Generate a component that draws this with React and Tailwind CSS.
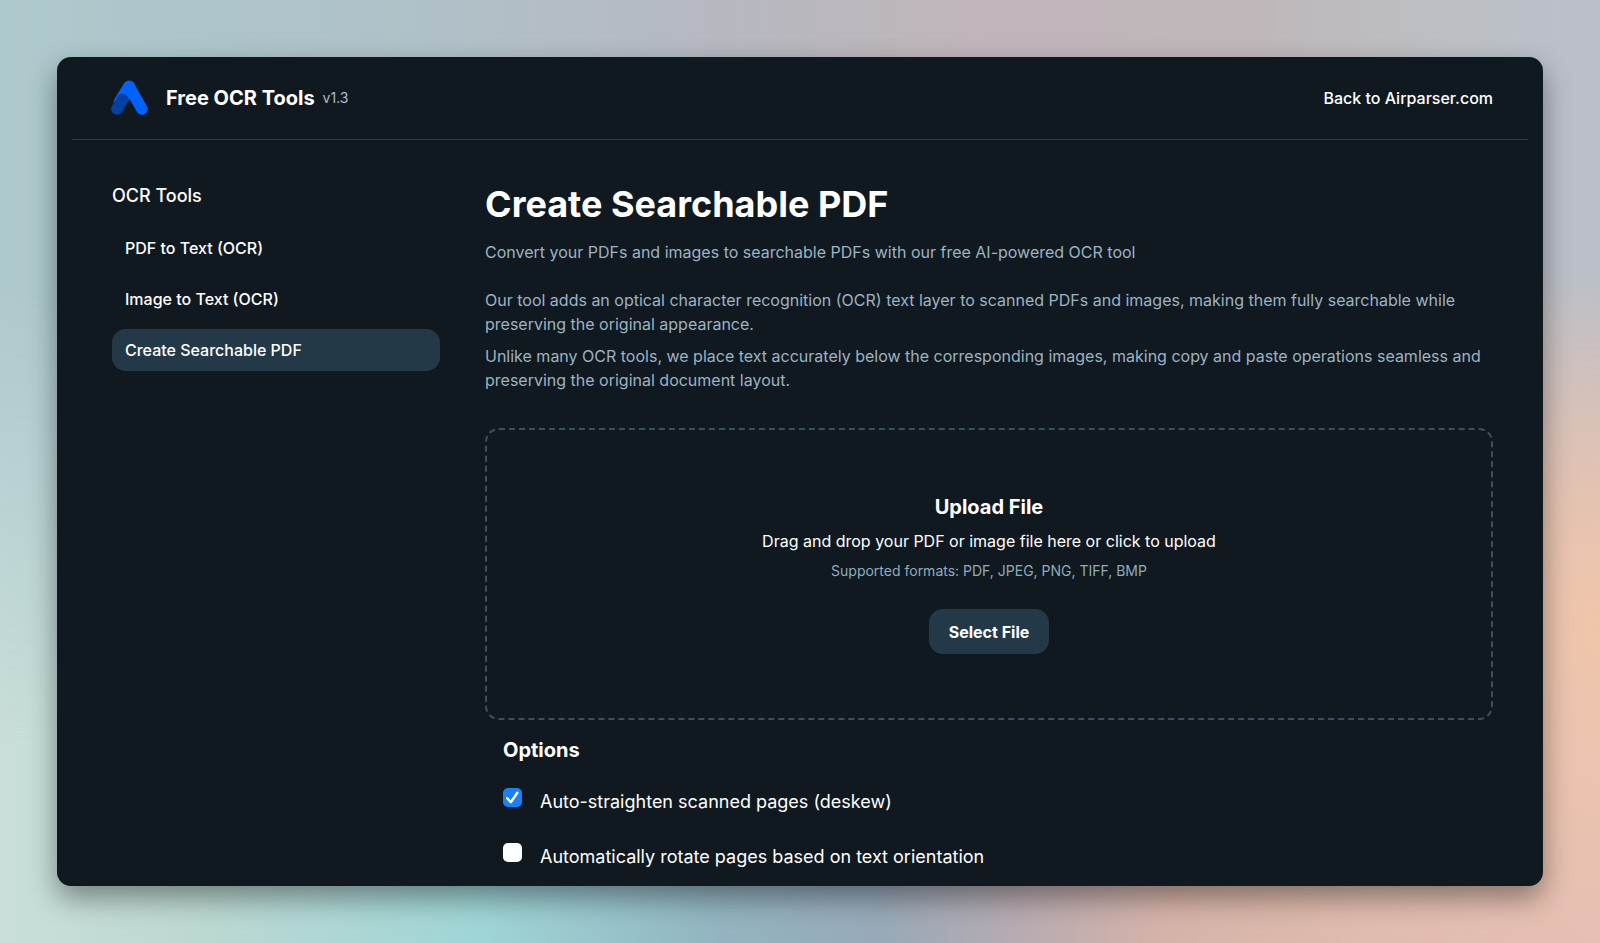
const tools = [
  { label: 'PDF to Text (OCR)', href: '#pdf-to-text' },
  { label: 'Image to Text (OCR)', href: '#image-to-text' },
  { label: 'Create Searchable PDF', href: '#searchable-pdf', active: true },
];

const options = [
  { id: 'deskew', label: 'Auto-straighten scanned pages (deskew)', checked: true },
  { id: 'rotate', label: 'Automatically rotate pages based on text orientation', checked: false },
];

function Backdrop() {
  return (
    <div className="absolute inset-0 -z-10 bg-[linear-gradient(to_right,#aec9cd_0%,#adc4ca_14%,#b1c0c8_28%,#b6b8c0_45%,#c0b5ba_62%,#bfb7ba_78%,#bcc0c5_92%,#babfca_100%)]">
      {/* lower half fades in over the top colours */}
      <div className="h-full bg-[linear-gradient(to_right,#c9deda_0%,#bdd8d2_12%,#9fd5d6_30%,#92b4c0_45%,#98a9b8_55%,#b9abb1_64%,#d6b3a9_73%,#e0bcae_86%,#e4bfb4_100%)] [mask-image:linear-gradient(to_bottom,transparent_30%,black_80%)]" />
      <div className="absolute inset-0 bg-[radial-gradient(ellipse_260px_360px_at_100%_66%,#f0c5aa_0%,transparent_100%)]" />
    </div>
  );
}

function Logo() {
  return (
    <svg viewBox="0 0 37 35" className="h-[35px] w-[37px]" fill="none" strokeLinecap="round" strokeLinejoin="round" strokeWidth="11.6">
      <path d="M9 22 L18.2 6.8" stroke="#0062ff" strokeWidth="12.4" />
      <path d="M5.9 28.9 L11.6 19.4" stroke="#04409f" />
      <path d="M18.2 6.8 L30.9 28.9" stroke="#0062ff" />
    </svg>
  );
}

function Header() {
  return (
    <header className="mx-[15px] flex items-center justify-between border-b border-[#263c49] pt-[23px] pr-[35px] pb-6 pl-[39px]">
      <div className="flex items-center">
        <Logo />
        <span className="ml-[18px] text-xl font-bold">Free OCR Tools</span>
        <span className="ml-2 text-sm text-[#b4bcc2]">v1.3</span>
      </div>
      <a href="#airparser" className="font-medium">Back to Airparser.com</a>
    </header>
  );
}

function Sidebar() {
  return (
    <nav className="w-[328px] shrink-0">
      <h2 className="text-lg leading-7 font-medium">OCR Tools</h2>
      <ul className="mt-[17px] space-y-[9px]">
        {tools.map((tool) => (
          <li key={tool.label}>
            <a
              href={tool.href}
              className={`block rounded-[14px] px-[13px] py-[9px] font-medium ${tool.active ? 'bg-[#243947]' : ''}`}
            >
              {tool.label}
            </a>
          </li>
        ))}
      </ul>
    </nav>
  );
}

function UploadBox() {
  return (
    <section className="mt-9 flex flex-col items-center rounded-[14px] border-2 border-dashed border-[#3a505e] pt-[63px] pb-16 text-center">
      <h2 className="text-xl leading-7 font-bold">Upload File</h2>
      <p className="mt-2">Drag and drop your PDF or image file here or click to upload</p>
      <p className="mt-2 text-sm text-[#8fabbd]">Supported formats: PDF, JPEG, PNG, TIFF, BMP</p>
      <button type="button" className="mt-7 h-[45px] rounded-[14px] bg-[#243947] px-5 font-bold">
        Select File
      </button>
    </section>
  );
}

function Option({ option }) {
  return (
    <div className="flex items-start">
      <input
        id={option.id}
        type="checkbox"
        defaultChecked={option.checked}
        className="peer h-[19px] w-[19px] appearance-none rounded-[5px] bg-white checked:bg-[#1a80fa]"
      />
      <svg viewBox="0 0 19 19" className="pointer-events-none -ml-[19px] hidden h-[19px] w-[19px] peer-checked:block" fill="none" stroke="white" strokeWidth="2.4" strokeLinecap="round" strokeLinejoin="round">
        <path d="M4.2 10.2 L7.8 14.2 L14.4 4.8" />
      </svg>
      <label htmlFor={option.id} className="ml-[18px] text-lg leading-7">{option.label}</label>
    </div>
  );
}

export default function App() {
  return (
    <div className="relative isolate min-h-screen p-[57px] font-['Inter',sans-serif] text-base text-white">
      <Backdrop />
      <div className="overflow-hidden rounded-[14px] bg-[#111920] shadow-[0_12px_28px_rgba(0,0,0,0.4)]">
        <Header />
        <div className="flex gap-[45px] pt-[42px] pr-[50px] pb-[15px] pl-[55px]">
          <Sidebar />
          <main className="min-w-0 flex-1">
            <h1 className="text-4xl leading-[44px] font-bold">Create Searchable PDF</h1>
            <div className="text-[#9bb3c3]">
              <p className="mt-[14px]">Convert your PDFs and images to searchable PDFs with our free AI-powered OCR tool</p>
              <p className="mt-6">
                Our tool adds an optical character recognition (OCR) text layer to scanned PDFs and images, making them fully searchable while preserving the original appearance.
              </p>
              <p className="mt-2">
                Unlike many OCR tools, we place text accurately below the corresponding images, making copy and paste operations seamless and preserving the original document layout.
              </p>
            </div>
            <UploadBox />
            <section className="pt-4 pl-[18px]">
              <h2 className="text-xl leading-7 font-bold">Options</h2>
              <div className="mt-6 space-y-[27px]">
                {options.map((option) => (
                  <Option key={option.id} option={option} />
                ))}
              </div>
            </section>
          </main>
        </div>
      </div>
    </div>
  );
}
